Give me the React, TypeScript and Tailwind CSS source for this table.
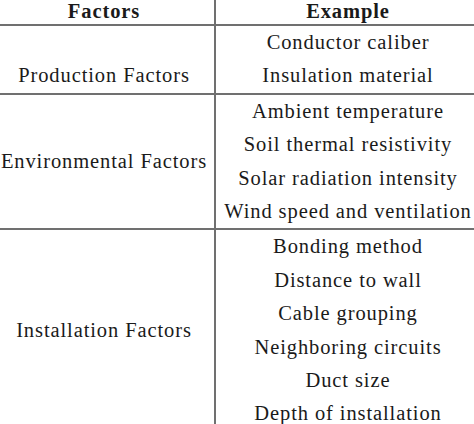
const sections = [
  { factor: "Production Factors", bottom: true, examples: ["Conductor caliber", "Insulation material"] },
  {
    factor: "Environmental Factors",
    bottom: false,
    examples: ["Ambient temperature", "Soil thermal resistivity", "Solar radiation intensity", "Wind speed and ventilation"]
  },
  {
    factor: "Installation Factors",
    bottom: false,
    examples: [
      "Bonding method",
      "Distance to wall",
      "Cable grouping",
      "Neighboring circuits",
      "Duct size",
      "Depth of installation"
    ]
  }
];

export default function App() {
  return (
    <div className="h-[424px] w-[474px] overflow-hidden bg-white text-[#1a1a1a]">
      <div className="-ml-[6px] w-[486px] font-['Liberation_Serif','Times_New_Roman',serif] text-[20.5px] tracking-[0.9px]">
        <div className="flex h-[26px] border-b-2 border-[#707070] font-bold">
          <div className="flex w-[220px] justify-center leading-[22px]">Factors</div>
          <div className="flex flex-1 justify-center border-l-2 border-[#707070] leading-[22px]">Example</div>
        </div>
        {sections.map((section) => (
          <div key={section.factor} className="flex border-b-2 border-[#707070]">
            <div
              className={`flex w-[220px] justify-center ${section.bottom ? "items-end leading-[33.4px]" : "items-center"}`}
            >
              {section.factor}
            </div>
            <div className="flex flex-1 flex-col items-center border-l-2 border-[#707070]">
              {section.examples.map((example) => (
                <div key={example} className="h-[33.4px] whitespace-nowrap leading-[33.4px]">
                  {example}
                </div>
              ))}
            </div>
          </div>
        ))}
      </div>
    </div>
  );
}
